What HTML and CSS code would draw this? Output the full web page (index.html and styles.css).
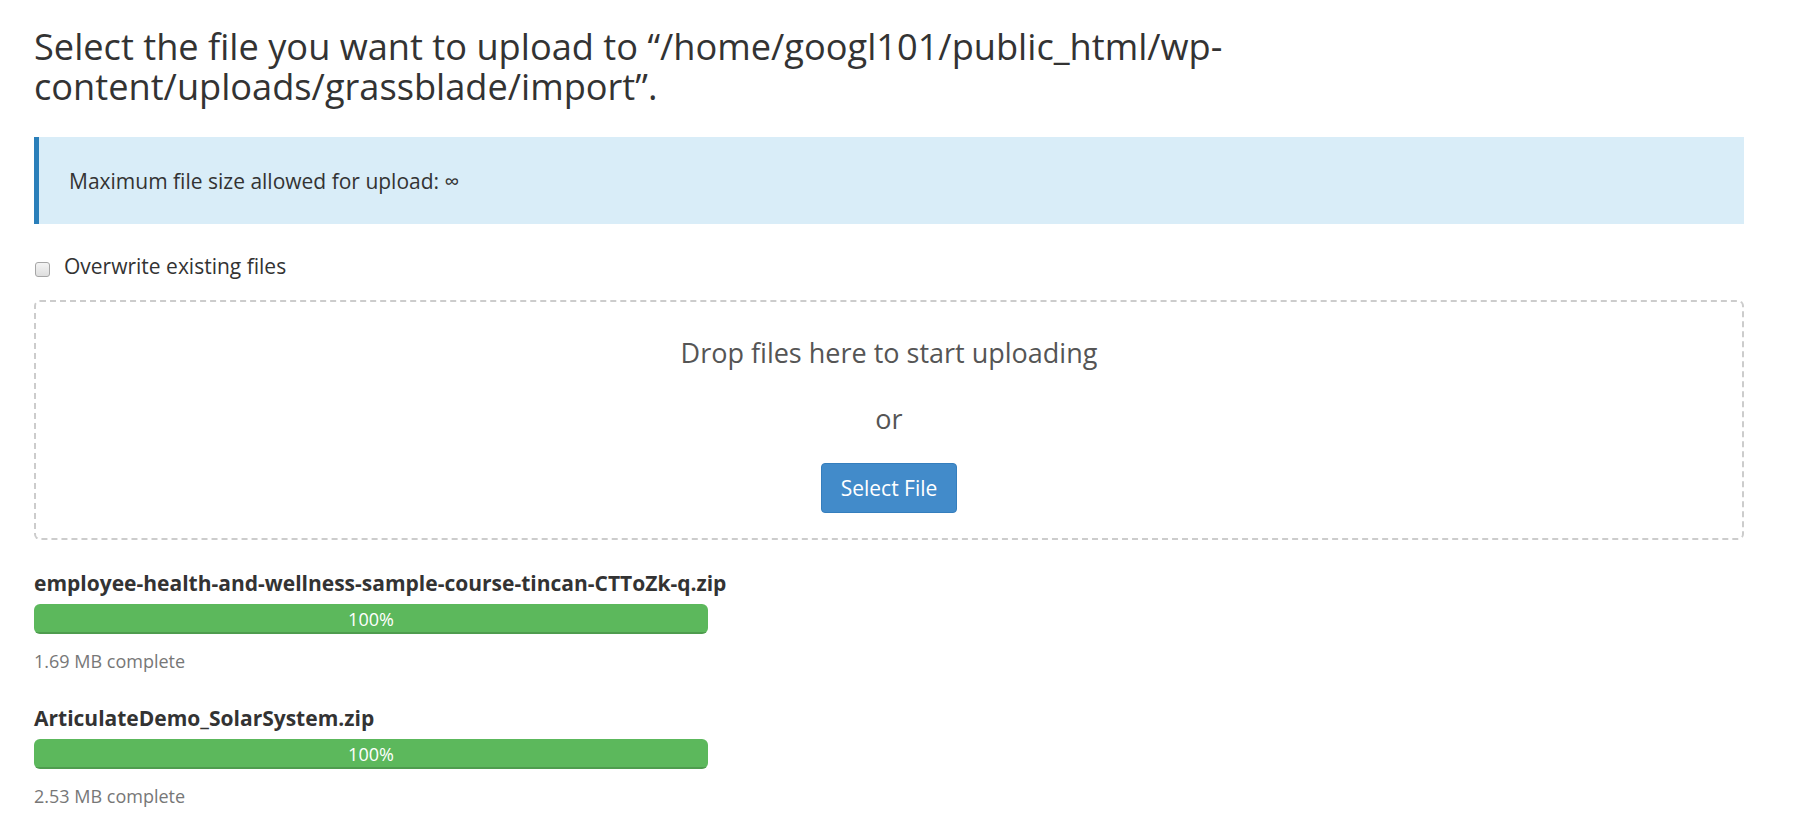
FILE: index.html
```html
<!DOCTYPE html>
<html lang="en">
<head>
<meta charset="utf-8">
<title>Upload</title>
<link rel="stylesheet" href="styles.css">
</head>
<body>
<div class="page">
  <h1 class="title">Select the file you want to upload to “/home/googl101/public_html/wp-content/uploads/grassblade/import”.</h1>

  <div class="alert">Maximum file size allowed for upload: ∞</div>

  <label class="check-row">
    <span class="checkbox"></span>
    <span class="check-label">Overwrite existing files</span>
  </label>

  <div class="dropzone">
    <div class="drop-text">Drop files here to start uploading</div>
    <div class="drop-or">or</div>
    <button class="btn-primary" type="button">Select File</button>
  </div>

  <div class="file-item">
    <div class="file-name">employee-health-and-wellness-sample-course-tincan-CTToZk-q.zip</div>
    <div class="progress"><div class="progress-bar" style="width:100%">100%</div></div>
    <div class="file-status">1.69 MB complete</div>
  </div>

  <div class="file-item">
    <div class="file-name">ArticulateDemo_SolarSystem.zip</div>
    <div class="progress"><div class="progress-bar" style="width:100%">100%</div></div>
    <div class="file-status">2.53 MB complete</div>
  </div>
</div>
</body>
</html>
```

FILE: styles.css
```css
* { box-sizing: border-box; }

html, body {
  margin: 0;
  padding: 0;
  background: #fff;
}

body {
  font-family: "Open Sans", "Liberation Sans", sans-serif;
  font-size: 21px;
  line-height: 30px;
  color: #333;
}

.page {
  padding: 27px 58px 0 34px;
}

.title {
  margin: 0 0 31px 0;
  font-size: 36.2px;
  line-height: 39.6px;
  font-weight: 400;
  color: #333;
}

.alert {
  background: #d9edf8;
  border-left: 5px solid #2a7fba;
  padding: 28.5px 30px;
  font-size: 21px;
  line-height: 30px;
  color: #333;
}

.check-row {
  display: flex;
  align-items: center;
  margin-top: 27px;
  height: 30px;
}

.checkbox {
  width: 15px;
  height: 15px;
  margin-left: 1px;
  margin-top: 7px;
  border: 1px solid #a6a6a6;
  border-radius: 3px;
  background: linear-gradient(#f4f4f4, #dedede);
}

.check-label {
  margin-left: 14px;
}

.dropzone {
  margin-top: 19px;
  height: 240px;
  border: 2px dashed #cccccc;
  border-radius: 6px;
  display: flex;
  flex-direction: column;
  align-items: center;
  padding-top: 32px;
}

.drop-text {
  font-size: 27px;
  line-height: 38px;
  color: #555;
}

.drop-or {
  margin-top: 28px;
  font-size: 27px;
  line-height: 38px;
  color: #555;
}

.btn-primary {
  margin-top: 25px;
  height: 50px;
  padding: 0 19px;
  font-family: "Open Sans", "Liberation Sans", sans-serif;
  font-size: 21px;
  line-height: 30px;
  color: #fff;
  background: #428bca;
  border: 1px solid #357ebd;
  border-radius: 4px;
}

.file-item {
  margin-top: 28px;
}

.file-name {
  font-weight: 700;
  font-size: 21px;
  line-height: 30px;
  color: #333;
}

.progress {
  margin-top: 6px;
  width: 674px;
  height: 30px;
  border-radius: 6px;
  background: #f5f5f5;
  overflow: hidden;
}

.progress-bar {
  height: 100%;
  background: #5cb85c;
  box-shadow: inset 0 -2px 0 rgba(0, 0, 0, 0.15);
  color: #fff;
  text-align: center;
  font-size: 18px;
  line-height: 30px;
}

.file-status {
  margin-top: 14px;
  font-size: 18px;
  line-height: 27px;
  color: #777;
}
```
